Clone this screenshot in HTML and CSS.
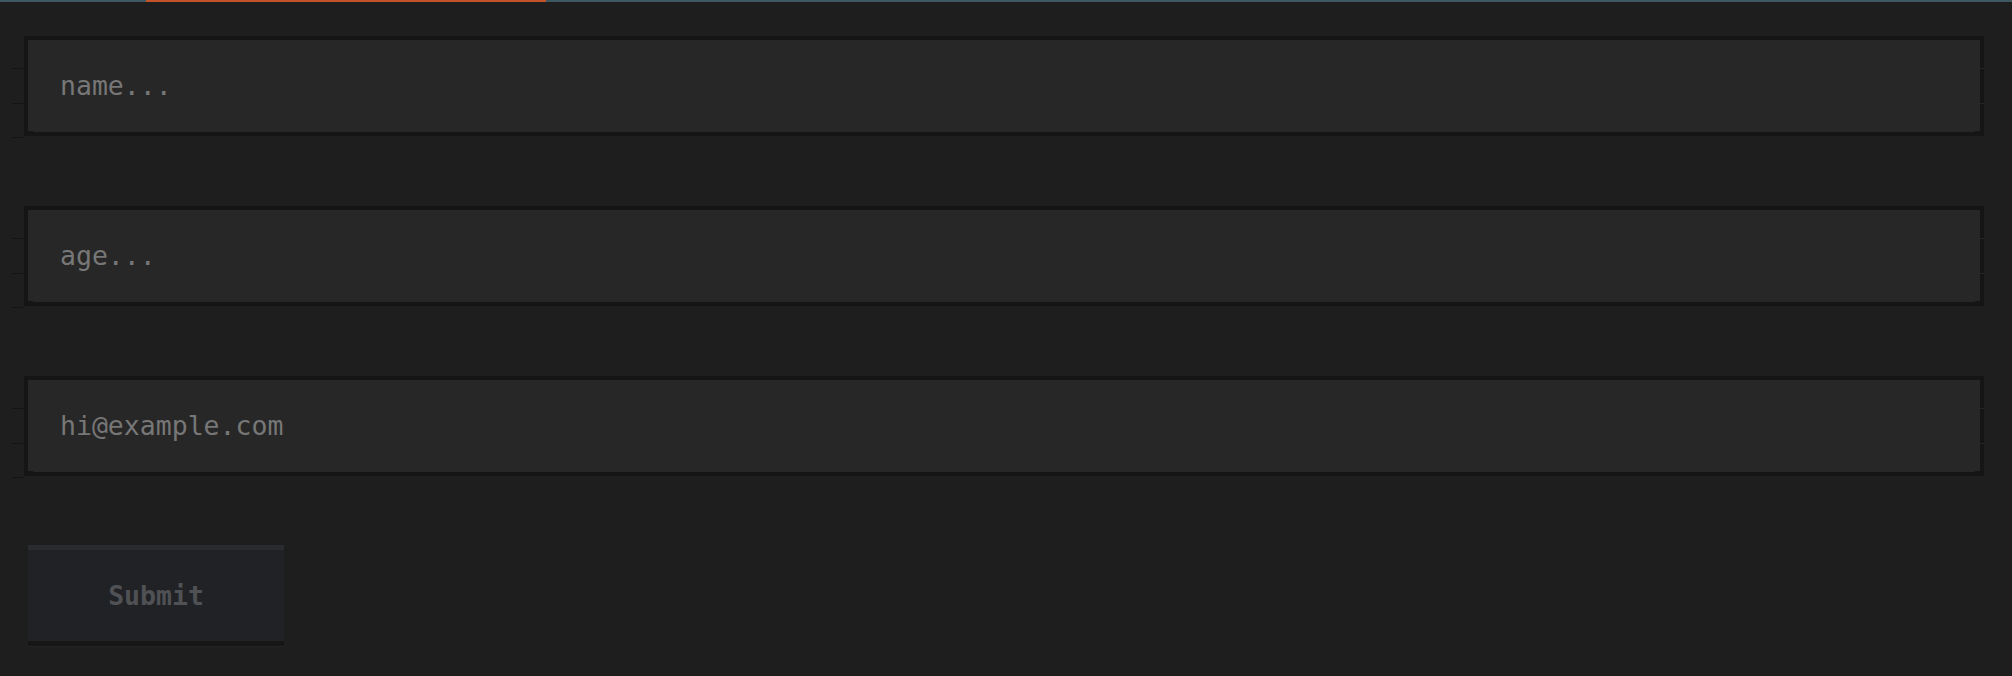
FILE: index.html
```html
<!DOCTYPE html>
<html lang="en">
<head>
<meta charset="utf-8">
<title>Form</title>
<link rel="stylesheet" href="styles.css">
</head>
<body>
<div class="topbar"><div class="topbar-accent"></div></div>
<form class="form">
  <div class="field"><input class="input" type="text" placeholder="name..."></div>
  <div class="field"><input class="input" type="text" placeholder="age..."></div>
  <div class="field"><input class="input" type="email" placeholder="hi@example.com"></div>
  <div class="actions"><button class="submit" type="button">Submit</button></div>
</form>
</body>
</html>
```
FILE: styles.css
```css
* { box-sizing: border-box; }
html, body { margin: 0; padding: 0; }
body {
  background: #1e1e1e;
  font-family: "DejaVu Sans Mono", "Liberation Mono", monospace;
  width: 2012px;
  height: 676px;
  overflow: hidden;
}
.topbar {
  height: 2px;
  background: #3d5861;
  display: flex;
  padding-left: 146px;
}
.topbar-accent {
  width: 400px;
  height: 2px;
  background: #c4532a;
}
.form {
  display: flex;
  flex-direction: column;
  gap: 70px;
  padding: 34px 28px 0 24px;
}
.field {
  position: relative;
  height: 100px;
  border: 4px solid #151515;
  border-bottom-width: 5px;
  background: #272727;
  display: flex;
  align-items: center;
}
.field::before {
  content: "";
  position: absolute;
  left: -16px;
  top: 28px;
  width: 12px;
  height: 1px;
  background: #141414;
  box-shadow: 0 35px 0 #141414, 0 69px 0 #141414;
}
.field::after {
  content: "";
  position: absolute;
  right: -4px;
  top: 28px;
  width: 4px;
  height: 1px;
  background: #262626;
  box-shadow: 0 35px 0 #262626;
}
.input {
  flex: 1;
  height: 100%;
  border: 0;
  outline: none;
  background: transparent;
  padding: 0 0 0 32px;
  font-family: "DejaVu Sans Mono", "Liberation Mono", monospace;
  font-size: 26.5px;
  color: #cfcfcf;
  box-shadow: 0 6px 0 -5px #262626;
}
.input::placeholder { color: #777777; opacity: 1; }
.actions {
  display: flex;
  padding-left: 4px;
  margin-top: -1px;
}
.submit {
  width: 256px;
  height: 101px;
  border: 0;
  border-top: 5px solid #2a2b2e;
  border-bottom: 5px solid #161616;
  background: #212225;
  color: #505155;
  font-family: "DejaVu Sans Mono", "Liberation Mono", monospace;
  font-size: 26.5px;
  font-weight: bold;
  padding: 0;
  box-shadow: 0 1px 0 #232323;
}
```
